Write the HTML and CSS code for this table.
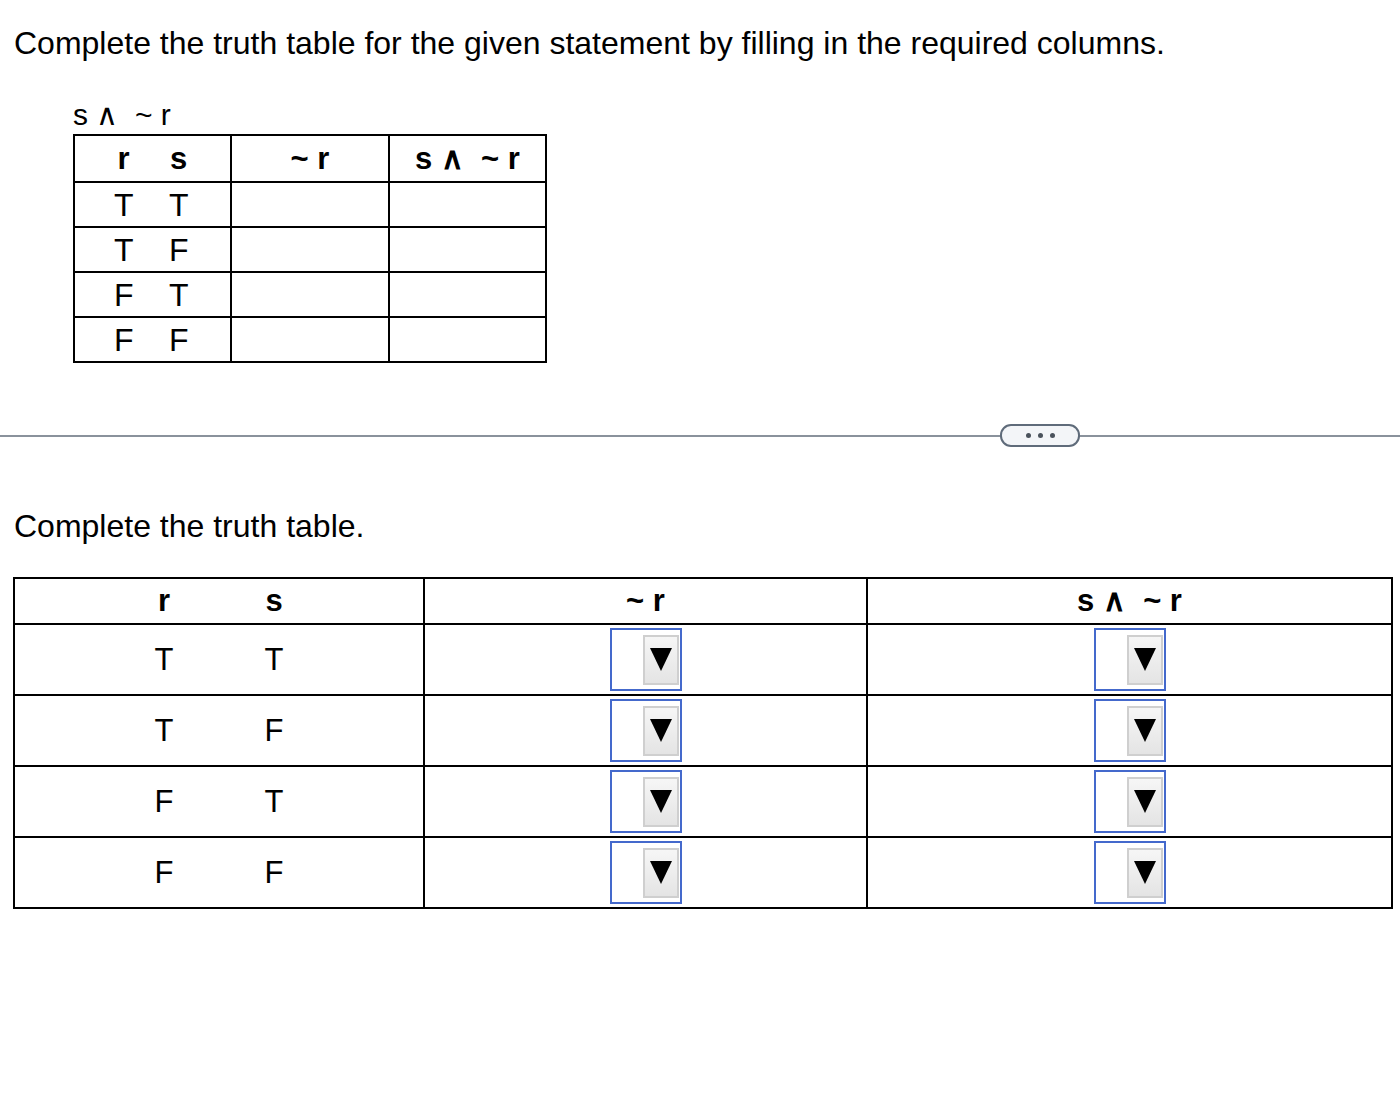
FILE: index.html
```html
<!DOCTYPE html>
<html>
<head>
<meta charset="utf-8">
<link rel="stylesheet" href="styles.css">
</head>
<body>
<p class="prompt">Complete the truth table for the given statement by filling in the required columns.</p>

<div class="given">
  <div class="given-label">s ∧ &nbsp;~ r</div>
  <table class="t1">
    <tr class="h"><td><span class="pair"><span>r</span><span>s</span></span></td><td>~ r</td><td>s ∧ &nbsp;~ r</td></tr>
    <tr><td><span class="pair"><span>T</span><span>T</span></span></td><td></td><td></td></tr>
    <tr><td><span class="pair"><span>T</span><span>F</span></span></td><td></td><td></td></tr>
    <tr><td><span class="pair"><span>F</span><span>T</span></span></td><td></td><td></td></tr>
    <tr><td><span class="pair"><span>F</span><span>F</span></span></td><td></td><td></td></tr>
  </table>
</div>

<div class="divider">
  <span class="pill"><span class="dot"></span><span class="dot"></span><span class="dot"></span></span>
</div>

<p class="prompt2">Complete the truth table.</p>

<table class="t2">
  <tr class="h"><td><span class="pair2"><span>r</span><span>s</span></span></td><td>~ r</td><td>s ∧ &nbsp;~ r</td></tr>
  <tr><td><span class="pair2"><span>T</span><span>T</span></span></td><td><span class="sel"><span class="btn"><span class="tri"></span></span></span></td><td><span class="sel"><span class="btn"><span class="tri"></span></span></span></td></tr>
  <tr><td><span class="pair2"><span>T</span><span>F</span></span></td><td><span class="sel"><span class="btn"><span class="tri"></span></span></span></td><td><span class="sel"><span class="btn"><span class="tri"></span></span></span></td></tr>
  <tr><td><span class="pair2"><span>F</span><span>T</span></span></td><td><span class="sel"><span class="btn"><span class="tri"></span></span></span></td><td><span class="sel"><span class="btn"><span class="tri"></span></span></span></td></tr>
  <tr><td><span class="pair2"><span>F</span><span>F</span></span></td><td><span class="sel"><span class="btn"><span class="tri"></span></span></span></td><td><span class="sel"><span class="btn"><span class="tri"></span></span></span></td></tr>
</table>
</body>
</html>
```

FILE: styles.css
```css
html, body {
  margin: 0;
  padding: 0;
  background: #fff;
}
body {
  font-family: "Liberation Sans", Arial, sans-serif;
  color: #000;
}
.prompt {
  margin: 0;
  padding: 25px 0 0 14px;
  font-size: 32px;
  line-height: 36px;
}
.given {
  padding: 39px 0 0 73px;
}
.given-label {
  font-size: 30px;
  line-height: 30px;
  height: 34px;
}
.t1 {
  border-collapse: collapse;
  border: 2px solid #000;
  font-size: 32px;
  table-layout: fixed;
  width: 474px;
}
.t1 td {
  border: 2px solid #000;
  height: 43px;
  padding: 0;
  text-align: center;
  vertical-align: middle;
  line-height: 30px;
}
.t1 .h td {
  font-weight: bold;
  font-size: 31px;
  height: 45px;
}
.pair {
  display: inline-flex;
  margin-left: -3px;
}
.pair span {
  width: 55px;
  text-align: center;
}
.divider {
  margin-top: 72px;
  height: 2px;
  background: #8a929c;
  position: relative;
}
.pill {
  position: absolute;
  left: 1000px;
  top: -11px;
  width: 76px;
  height: 19px;
  border: 2px solid #5f6b7a;
  border-radius: 11px;
  background: #f3f5f8;
  display: flex;
  align-items: center;
  justify-content: center;
  gap: 7px;
}
.dot {
  width: 5px;
  height: 5px;
  border-radius: 50%;
  background: #4a525c;
}
.prompt2 {
  margin: 0;
  padding: 71px 0 0 14px;
  font-size: 32px;
  line-height: 36px;
}
.t2 {
  margin: 33px 0 0 13px;
  border-collapse: collapse;
  border: 2px solid #000;
  table-layout: fixed;
  width: 1380px;
  font-size: 31px;
}
.t2 td {
  border: 2px solid #000;
  padding: 0;
  height: 69px;
  text-align: center;
  vertical-align: middle;
  line-height: 30px;
}
.t2 td:nth-child(1) { width: 408px; }
.t2 td:nth-child(2) { width: 441px; }
.t2 .h td {
  height: 44px;
  font-weight: bold;
}
.pair2 {
  display: inline-flex;
}
.pair2 span {
  width: 110px;
  text-align: center;
}
.sel {
  display: inline-flex;
  box-sizing: border-box;
  width: 72px;
  height: 63px;
  border: 2px solid #4469cc;
  background: #fff;
  align-items: center;
  justify-content: flex-end;
  padding-right: 1px;
  vertical-align: middle;
}
.btn {
  box-sizing: border-box;
  width: 36px;
  height: 50px;
  border: 2px solid #cfcfcf;
  background: linear-gradient(#f6f6f6, #e4e4e4);
  display: flex;
  align-items: center;
  justify-content: center;
}
.tri {
  width: 0;
  height: 0;
  border-left: 11px solid transparent;
  border-right: 11px solid transparent;
  border-top: 23px solid #000;
}
```
